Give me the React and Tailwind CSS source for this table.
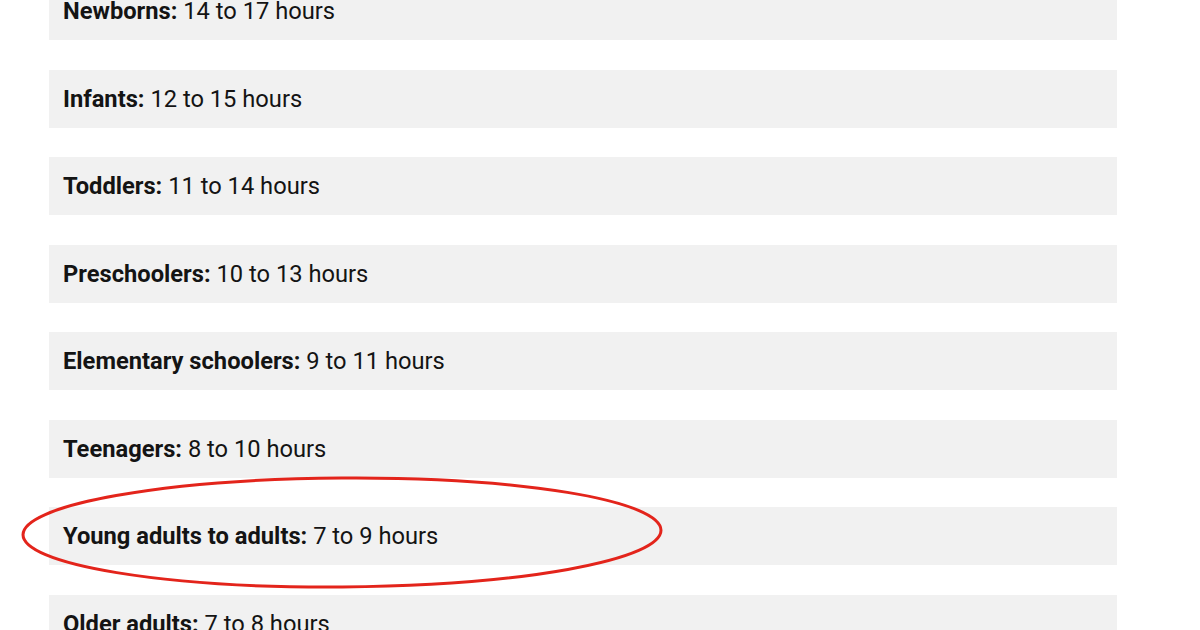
import React from "react";

const rows = [
  ["Newborns:", "14 to 17 hours"],
  ["Infants:", "12 to 15 hours"],
  ["Toddlers:", "11 to 14 hours"],
  ["Preschoolers:", "10 to 13 hours"],
  ["Elementary schoolers:", "9 to 11 hours"],
  ["Teenagers:", "8 to 10 hours"],
  ["Young adults to adults:", "7 to 9 hours"],
  ["Older adults:", "7 to 8 hours"],
];

export default function App() {
  return (
    <div className="relative w-[1200px] h-[630px] overflow-hidden bg-white" style={{ fontFamily: "Roboto, 'Noto Sans', sans-serif" }}>
      <div className="flex flex-col gap-[29.5px] -mt-[18px] pl-[49px] w-[1117px]">
        {rows.map(([b, t]) => (
          <div key={b} className="h-[58px] shrink-0 bg-[#f1f1f1] flex items-center pl-[14px] pt-[2px] text-[23.7px] text-[#141414] leading-none">
            <span className="font-bold">{b}</span>
            <span>&nbsp;{t}</span>
          </div>
        ))}
      </div>
      <svg className="absolute left-0 top-0 pointer-events-none" width="1200" height="630">
        <ellipse cx="342" cy="532.5" rx="319" ry="54.5" fill="none" stroke="#e3241b" strokeWidth="3" transform="rotate(-0.4 342 532.5)" />
      </svg>
    </div>
  );
}
